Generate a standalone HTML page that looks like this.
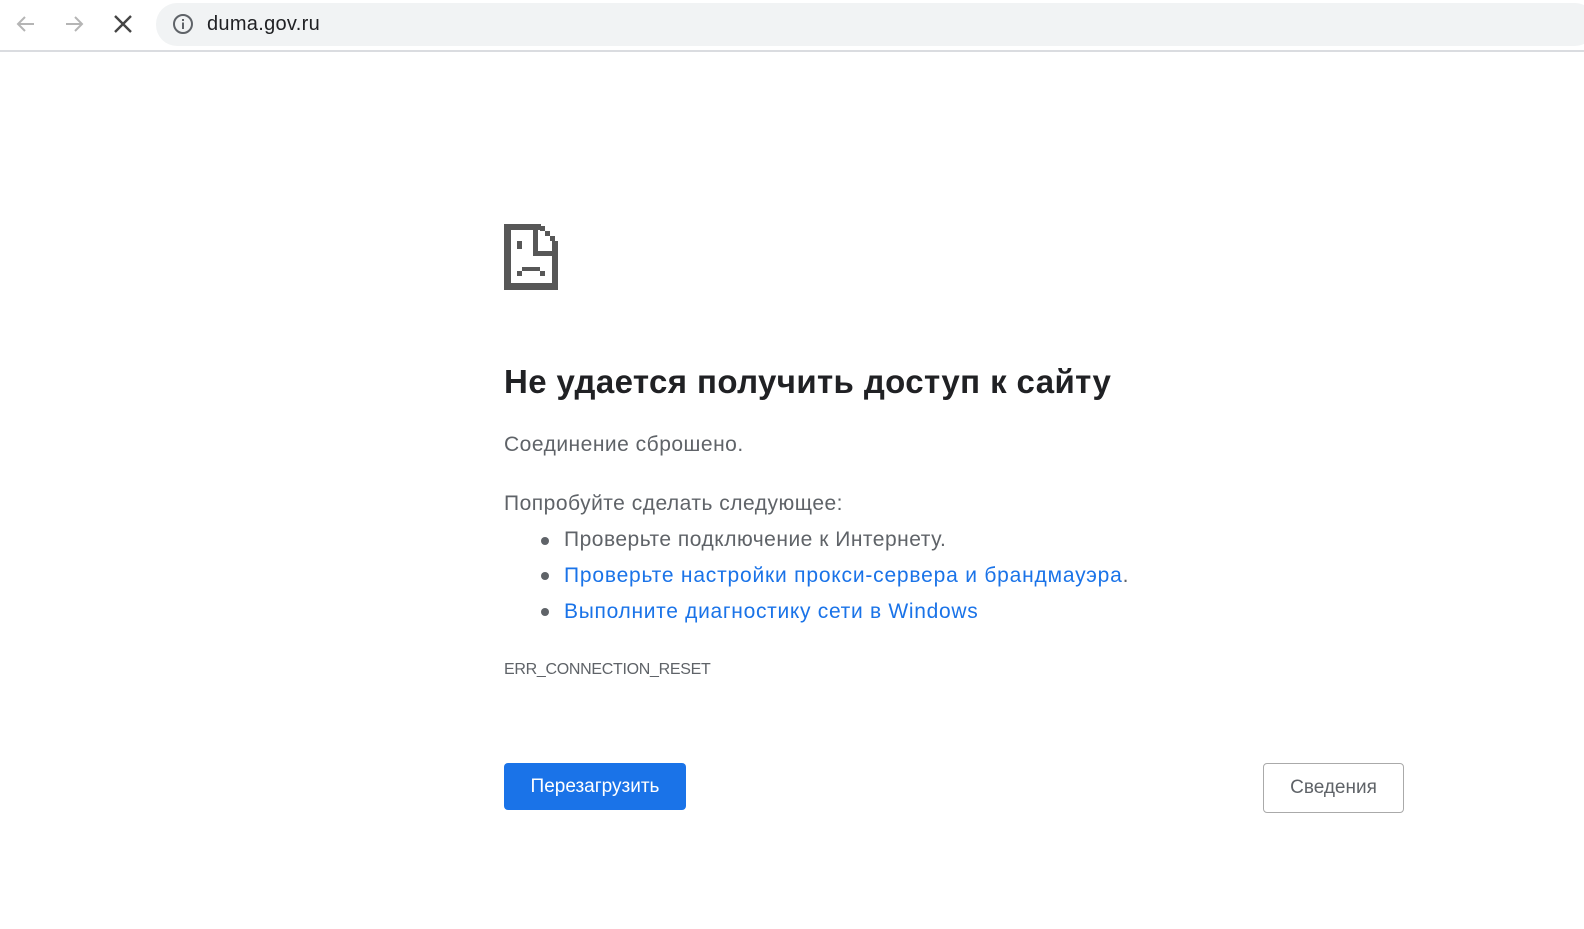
<!DOCTYPE html>
<html><head><meta charset="utf-8"><style>
body{margin:0;width:1584px;height:929px;background:#fff;font-family:"Liberation Sans","DejaVu Sans",sans-serif;position:relative;overflow:hidden}
.a{position:absolute;white-space:nowrap}
.bar{position:absolute;left:0;top:0;width:1584px;height:50px;background:#fff;border-bottom:2px solid #dadce0}
.omni{position:absolute;left:156px;top:3px;width:1440px;height:43px;background:#f1f3f4;border-radius:21px}
.t{color:#5f6368;font-size:21px;letter-spacing:0.5px}
.l{color:#1a73e8;font-size:21px;letter-spacing:0.8px}
.dot{position:absolute;width:8px;height:8px;border-radius:50%;background:#5f6368}
</style></head><body>
<div class="bar"></div>
<div class="omni"></div>
<svg class="a" style="left:14px;top:12px" width="24" height="24" viewBox="0 0 24 24"><path d="M20 12H5M11 5l-7 7 7 7" stroke="#b5b5b5" stroke-width="2" fill="none"/></svg>
<svg class="a" style="left:62px;top:12px" width="24" height="24" viewBox="0 0 24 24"><path d="M4 12h15M13 5l7 7-7 7" stroke="#b5b5b5" stroke-width="2" fill="none"/></svg>
<svg class="a" style="left:111px;top:12px" width="24" height="24" viewBox="0 0 24 24"><path d="M4 4l16 16M20 4L4 20" stroke="#454545" stroke-width="2.4" fill="none"/></svg>
<svg class="a" style="left:172px;top:13px" width="22" height="22" viewBox="0 0 22 22"><circle cx="11" cy="11" r="9" stroke="#5f6368" stroke-width="2" fill="none"/><rect x="10" y="9.5" width="2" height="6.5" fill="#5f6368"/><rect x="10" y="6" width="2" height="2" fill="#5f6368"/></svg>
<div class="a" style="left:207px;top:13px;font-size:20px;color:#202124;letter-spacing:0.3px">duma.gov.ru</div>

<svg class="a" style="left:504px;top:224px" width="56" height="66" viewBox="0 0 56 66" fill="#575757">
<rect x="0" y="0" width="7" height="66"/><rect x="0" y="59" width="54" height="7"/><rect x="48" y="17" width="6" height="49"/>
<rect x="0" y="0" width="37" height="6"/><rect x="36" y="2" width="5" height="5"/><rect x="41" y="7" width="5" height="5"/><rect x="46" y="12" width="5" height="5"/>
<rect x="29" y="0" width="5" height="32"/><rect x="29" y="27" width="25" height="5"/>
<rect x="13" y="17" width="5" height="8"/><rect x="18" y="43" width="18" height="4"/><rect x="13" y="47" width="5" height="5"/><rect x="36" y="47" width="5" height="5"/>
</svg>

<div class="a" style="left:504px;top:363px;font-size:33px;font-weight:bold;color:#202124;letter-spacing:0.4px">Не удается получить доступ к сайту</div>
<div class="a t" style="left:504px;top:433px">Соединение сброшено.</div>
<div class="a t" style="left:504px;top:492px">Попробуйте сделать следующее:</div>
<div class="dot" style="left:541px;top:537px"></div>
<div class="a t" style="left:564px;top:528px">Проверьте подключение к Интернету.</div>
<div class="dot" style="left:541px;top:572px"></div>
<div class="a l" style="left:564px;top:564px">Проверьте настройки прокси-сервера и брандмауэра<span style="color:#5f6368">.</span></div>
<div class="dot" style="left:541px;top:608px"></div>
<div class="a l" style="left:564px;top:600px;letter-spacing:0.7px">Выполните диагностику сети в Windows</div>
<div class="a" style="left:504px;top:661px;font-size:16px;color:#5f6368;letter-spacing:-0.3px">ERR_CONNECTION_RESET</div>

<div class="a" style="left:504px;top:763px;width:182px;height:47px;background:#1a73e8;border-radius:4px;color:#fff;font-size:19px;line-height:47px;text-align:center">Перезагрузить</div>
<div class="a" style="left:1263px;top:763px;width:139px;height:48px;border:1px solid #aaa;border-radius:4px;color:#5f6368;font-size:19px;line-height:48px;text-align:center">Сведения</div>
</body></html>
